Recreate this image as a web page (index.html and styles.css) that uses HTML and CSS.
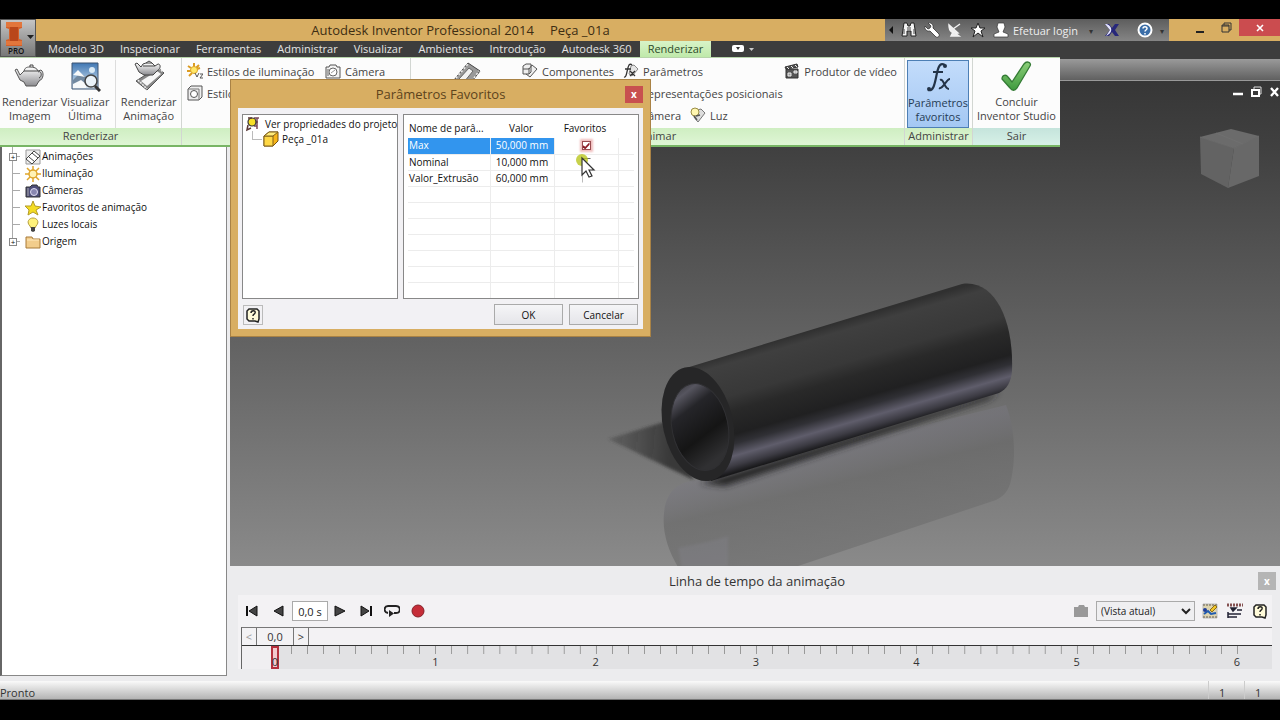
FILE: index.html
```html
<!DOCTYPE html>
<html lang="pt-BR">
<head>
<meta charset="utf-8">
<meta name="viewport" content="width=device-width, initial-scale=1">
<title>Autodesk Inventor Professional 2014 - Peça _01a</title>
<link rel="stylesheet" href="styles.css">
</head>
<body>
<div class="app">
  <header class="topbar">
    <button class="app-button" aria-label="Menu do aplicativo">
      <svg width="34" height="36" viewBox="0 0 34 36">
        <path d="M5 2h16v6l-3 1v10l3 1v6H5v-6l3-1V9L5 8z" fill="#d4602a"/>
        <path d="M9 3h8v22H9z" fill="#b9471b"/><path d="M5 2h16v5H5zM5 21h16v4H5z" fill="#e2763c"/>
        <path d="M26 15h7l-3.500 4z" fill="#222"/>
      </svg>
      <span class="app-tag">PRO</span>
    </button>
    <div class="topbar-main">
      <div class="titlebar">
        <h1 class="title"><span>Autodesk Inventor Professional 2014</span><span>Peça _01a</span></h1>
        <div class="infocenter">
          <svg width="6" height="12" viewBox="0 0 6 12"><path d="M5 2v8L1 6z" fill="#111"/></svg>
          <button class="tool" aria-label="Pesquisar"><svg width="16" height="16" viewBox="0 0 16 16"><path d="M3 1h3l1 3h2l1-3h3l2 13h-5V9H6v5H1z" fill="#f4f4f4" stroke="#222"/><path d="M3 7v5M13 7v5M7 5v3M9 5v3" stroke="#444"/></svg></button>
          <button class="tool" aria-label="Ferramentas"><svg width="16" height="16" viewBox="0 0 16 16"><path d="M4 1c3-1 6 2 5 5l6 6c1 2-1 4-3 3L6 9C3 10 0 7 1 4l3 3 2-1 1-2z" fill="#fff" stroke="#333" stroke-width=".8"/></svg></button>
          <button class="tool" aria-label="Comunicação"><svg width="16" height="16" viewBox="0 0 16 16"><path d="M2 3c0 7 4 9 9 8zM6 7l7-5M8 11l4 3H4l2-4z" fill="#eee" stroke="#f2f2f2" stroke-width="1.500"/></svg></button>
          <button class="tool" aria-label="Favoritos"><svg width="16" height="16" viewBox="0 0 16 16"><path d="M8 1l2 5h5l-4 3 2 6-5-4-5 4 2-6-4-3h5z" fill="#fff" stroke="#222"/></svg></button>
          <button class="tool login"><svg width="16" height="16" viewBox="0 0 16 16"><path d="M5 1h6l1 4-2 5 5 2v3H1v-3l5-2-2-5z" fill="#fff" stroke="#333" stroke-width=".7"/></svg><span>Efetuar login</span></button>
          <span class="dot">▾</span>
          <button class="tool" aria-label="Exchange"><svg width="16" height="16" viewBox="0 0 16 16"><path d="M1 2h4l3 4 3-4h4l-4 6 4 6h-4l-3-4-3 4H1l5-6z" fill="#27277a"/><path d="M1 2c6 0 10 8 1 12l4-6z" fill="#e8e8ff"/></svg></button>
          <button class="tool separated" aria-label="Ajuda"><svg width="16" height="16" viewBox="0 0 16 16"><circle cx="8" cy="8" r="6.500" fill="#3b6ea8" stroke="#fff" stroke-width="2"/><path d="M6 6.500C6 4 10 4 10 6.500 10 8 8 8 8 9.500M8 11v1.500" fill="none" stroke="#fff" stroke-width="1.500"/></svg></button>
          <span class="dot">▾</span>
        </div>
        <div class="window-controls">
          <button aria-label="Minimizar"><svg width="10" height="12" viewBox="0 0 10 12"><path d="M1 10h8" stroke="#222" stroke-width="2"/></svg></button>
          <button aria-label="Restaurar"><svg width="11" height="12" viewBox="0 0 11 12"><path d="M3 3V1h7v7H8M1 3h7v7H1zM1 4h7" fill="none" stroke="#333"/></svg></button>
          <button class="close" aria-label="Fechar"><svg width="10" height="10" viewBox="0 0 10 10"><path d="M2 2l6 6M8 2L2 8" stroke="#fff" stroke-width="1.600"/></svg></button>
        </div>
      </div>
      <nav class="tabs">
        <a href="#">Modelo 3D</a><a href="#">Inspecionar</a><a href="#">Ferramentas</a><a href="#">Administrar</a><a href="#">Visualizar</a><a href="#">Ambientes</a><a href="#">Introdução</a><a href="#">Autodesk 360</a><a href="#" class="active">Renderizar</a>
        <button class="tool tab-menu" aria-label="Opções da faixa"><svg width="24" height="10" viewBox="0 0 24 10"><rect x="1" y="1" width="12" height="7" rx="2" fill="#fff"/><path d="M5 3h4L7 6z" fill="#333"/><path d="M18 4h5l-2.500 3z" fill="#ccc"/></svg></button>
      </nav>
    </div>
  </header>

  <div class="ribbon-row">
    <div class="ribbon">
      <section class="panel panel-render">
        <div class="panel-body">
          <button class="big"><svg width="32" height="32" viewBox="0 0 32 32"><defs><linearGradient id="pot" x2="0" y2="1"><stop stop-color="#fff"/><stop offset="1" stop-color="#8c8c90"/></linearGradient></defs><path d="M10 11L6 15 3 9 1 10l5 10 4 2 2 4h10l3-5c5-2 5-9 2-11l-3 1c-1-3-4-4-8-4s-5 1-6 4z" fill="url(#pot)" stroke="#555"/><path d="M24 12c3-2 5 4 1 6M10 11h14M16 7V5h3v2" fill="none" stroke="#444"/></svg><span>Renderizar<br>Imagem</span></button>
          <button class="big"><svg width="32" height="32" viewBox="0 0 32 32"><defs><linearGradient id="sky" x2="0" y2="1"><stop stop-color="#3f77b4"/><stop offset="1" stop-color="#e2edf5"/></linearGradient></defs><path d="M3 3h26v26H3z" fill="url(#sky)" stroke="#3d5572"/><path d="M4 20l7-7 6 4v11H4z" fill="#7289a0"/><path d="M4 15l5-5 7 7-5-1zM4 24l8-4 5 4v4H4z" fill="#f7f9fa"/><circle cx="23" cy="10" r="3" fill="#d9eaf6"/><circle cx="22" cy="21" r="6" fill="#eaf2f8" stroke="#444" stroke-width="1.500"/><path d="M26 26l5 5" stroke="#333" stroke-width="3"/></svg><span>Visualizar<br>Última</span></button>
          <button class="big split"><svg width="32" height="32" viewBox="0 0 32 32"><path d="M3 21L25 7l6 6-17 17z" fill="#888" stroke="#555"/><path d="M8 21l16-10 4 3-14 12z" fill="#f7f7f7"/><path d="M5 20l9 9M26 8l4 4" stroke="#eee" stroke-width="1.500" stroke-dasharray="2 1"/><path d="M10 4L8 7 4 3 2 4l4 8 5 3h9l4-4c4-2 4-7 1-7l-3 2-3-3h-6z" fill="url(#pot)" stroke="#444"/><path d="M13 3l3-2 3 2M10 6h12" fill="none" stroke="#444"/></svg><span>Renderizar<br>Animação</span></button>
        </div>
        <h2>Renderizar</h2>
      </section>
      <section class="panel panel-scene">
        <div class="panel-body scene-body">
          <button class="small"><svg width="16" height="16" viewBox="0 0 16 16"><path d="M7 0v4M1 3l3 2M0 8h4M2 13l3-3M12 2L9 5M7 7l6-2" stroke="#dc9c22" stroke-width="2"/><circle cx="7" cy="7" r="3.500" fill="#ffe768" stroke="#dba529"/><path d="M8 10l2 4 2-4M13 11h3l-3 4h3" fill="none" stroke="#555"/></svg>Estilos de iluminação</button>
          <button class="small"><svg width="16" height="16" viewBox="0 0 16 16"><use href="#camera"/></svg>Câmera</button>
          <button class="small"><svg width="16" height="16" viewBox="0 0 16 16"><path d="M1 4l3-3h11v11l-3 3H1z" fill="#eee" stroke="#555"/><path d="M1 4h11v11" fill="none" stroke="#777"/><circle cx="7" cy="9" r="3.500" fill="#fff" stroke="#555"/></svg>Estilos</button>
        </div>
        <div class="panel-foot"></div>
      </section>
      <section class="panel panel-animate">
        <div class="panel-body animate-body">
          <button class="big film" aria-label="Linha de tempo"><svg width="32" height="32" viewBox="0 0 32 32"><path d="M3 20L17 3l12 8-13 17z" fill="#999" stroke="#444"/><path d="M8 19l10-11 4 3-9 11z" fill="#f2f2f2" stroke="#666"/><path d="M5 18L17 4M23 18l5-7" stroke="#eee" stroke-width="1.500" stroke-dasharray="2 2"/></svg></button>
          <div class="animate-list">
            <div class="line"><button class="small"><svg width="16" height="16" viewBox="0 0 16 16"><path d="M1 3l3-2h5v8l-2 2H1zM1 6h6l3-4 5 4-7 8-4-3" fill="#eee" stroke="#555"/><path d="M7 5v6" stroke="#555"/></svg>Componentes</button><button class="small"><svg width="16" height="16" viewBox="0 0 16 16"><path d="M8 3l3-1 4 4-6 7-3-2z" fill="#e4e4e4" stroke="#888"/><path d="M1 14c3 1 3-9 5-12 1-1 2-1 3 0M2 6h6M7 8l5 5M12 8l-5 5" fill="none" stroke="#333" stroke-width="1.300"/></svg>Parâmetros</button></div>
            <div class="line inset"><button class="small">Representações posicionais</button></div>
            <div class="line inset"><button class="small">Câmera</button><button class="small"><svg width="16" height="16" viewBox="0 0 16 16"><path d="M7 3l4-1 4 4-7 9-4-5z" fill="#ddd" stroke="#777"/><circle cx="5" cy="5" r="4" fill="#fff6b0" stroke="#998c45"/><path d="M4 9l3 4M6 9l4-1" stroke="#555" stroke-width="1.500"/></svg>Luz</button></div>
          </div>
          <button class="small producer"><svg width="16" height="16" viewBox="0 0 16 16"><path d="M2 6h12v9H2zM1 4l12-3 1 3L2 6z" fill="#555" stroke="#333"/><path d="M3 4l2 2M7 3l2 2M11 2l2 2M4 10h3v3H4zM10 8h3v2h-3z" stroke="#eee" fill="#999"/></svg>Produtor de vídeo</button>
        </div>
        <h2>Animar</h2>
      </section>
      <section class="panel panel-admin">
        <div class="panel-body">
          <button class="big selected"><svg width="32" height="32" viewBox="0 0 32 32"><path d="M6 29c6 2 7-8 9-17 2-9 4-10 8-8M11 11h10" fill="none" stroke="#243448" stroke-width="2.200"/><circle cx="7" cy="28" r="2" fill="#243448"/><circle cx="23" cy="5" r="2" fill="#243448"/><path d="M18 19c4-2 4 9 9 9M28 18c-4 0-7 11-11 9" fill="none" stroke="#243448" stroke-width="2"/></svg><span>Parâmetros<br>favoritos</span></button>
        </div>
        <h2>Administrar</h2>
      </section>
      <section class="panel panel-exit">
        <div class="panel-body">
          <button class="big"><svg width="32" height="32" viewBox="0 0 32 32"><defs><linearGradient id="ok" x2="0" y2="1"><stop stop-color="#8ccf79"/><stop offset="1" stop-color="#3f9a3e"/></linearGradient></defs><path d="M1 19c0-4 4-5 6-2l4 5L23 4c3-4 8-1 6 2L16 28c-2 3-5 3-7 0z" fill="url(#ok)" stroke="#347b35" stroke-width="1.300"/></svg><span>Concluir<br>Inventor Studio</span></button>
        </div>
        <h2>Sair</h2>
      </section>
    </div>
    <div class="ribbon-rest">
      <div class="strip"></div>
      <div class="doc-controls">
        <button aria-label="Minimizar documento"><svg width="12" height="12" viewBox="0 0 12 12"><path d="M1 8h10" stroke="#fff" stroke-width="2.500"/></svg></button>
        <button aria-label="Restaurar documento"><svg width="12" height="12" viewBox="0 0 12 12"><path d="M4 3V1h7v7H9" fill="none" stroke="#ddd"/><path d="M2 4h7v6H2z" fill="none" stroke="#fff" stroke-width="2"/></svg></button>
        <button aria-label="Fechar documento"><svg width="12" height="12" viewBox="0 0 12 12"><path d="M3 2l7 8M10 2l-7 8" stroke="#fff" stroke-width="2.300"/></svg></button>
      </div>
    </div>
  </div>

  <main class="workspace">
    <aside class="browser">
      <ul class="tree">
        <li><span class="expander">+</span><svg width="16" height="16" viewBox="0 0 16 16"><path d="M1 1h14v14H1z" fill="#eee" stroke="#999"/><path d="M1 10l8-8 6 5-8 8z" fill="#fff" stroke="#444"/><path d="M4 8l6 5M7 4l6 5" stroke="#444"/></svg>Animações</li>
        <li><svg width="16" height="16" viewBox="0 0 16 16"><path d="M8 0v16M0 8h16M2 2l12 12M14 2L2 14" stroke="#dfa62c" stroke-width="1.500"/><circle cx="8" cy="8" r="4" fill="#fff3b6" stroke="#dfa62c" stroke-width="1.500"/></svg>Iluminação</li>
        <li><svg width="16" height="16" viewBox="0 0 16 16"><path d="M1 4h4l2-2h5l1 2h2v10H1z" fill="#4d4d78" stroke="#333"/><path d="M3 5v8" stroke="#aaa"/><circle cx="9" cy="9" r="3.500" fill="#8886b0" stroke="#dedcf2"/></svg>Câmeras</li>
        <li><svg width="16" height="16" viewBox="0 0 16 16"><path d="M8 1l2 5 6 1-5 3 2 5-5-3-5 3 1-5-4-4h6z" fill="#f4dc24" stroke="#b39b27"/></svg>Favoritos de animação</li>
        <li><svg width="16" height="16" viewBox="0 0 16 16"><path d="M5 9C1 5 4 1 8 1s7 4 3 8l-1 2H6z" fill="#fff27b" stroke="#b49d3b"/><path d="M6 10h4v4l-2 1-2-1z" fill="#444"/></svg>Luzes locais</li>
        <li><span class="expander">+</span><svg width="16" height="16" viewBox="0 0 16 16"><path d="M1 3h6l1 2h7v9H1z" fill="#f2cd8c" stroke="#a87b39"/><path d="M2 6h12" stroke="#ffebc0"/></svg>Origem</li>
      </ul>
    </aside>
    <div class="right">
      <div class="viewport">
        <svg class="scene" viewBox="230 147 1050 419" preserveAspectRatio="xMidYMid slice" role="img" aria-label="Peça _01a">
          <defs>
            <linearGradient id="tube" gradientUnits="userSpaceOnUse" x1="826" y1="326" x2="858" y2="437"><stop stop-color="#303030"/><stop offset=".08" stop-color="#3f3f3f"/><stop offset=".35" stop-color="#383838"/><stop offset=".48" stop-color="#292929"/><stop offset=".68" stop-color="#202021"/><stop offset=".76" stop-color="#303035"/><stop offset=".86" stop-color="#5f5d6b"/><stop offset=".94" stop-color="#3c3b43"/><stop offset="1" stop-color="#19191b"/></linearGradient>
            <linearGradient id="bore" x1="0" y1="0" x2=".3" y2="1"><stop stop-color="#2c2c2f"/><stop offset=".18" stop-color="#56555f"/><stop offset=".36" stop-color="#252529"/><stop offset=".7" stop-color="#151515"/><stop offset="1" stop-color="#303032"/></linearGradient>
            <linearGradient id="shade" gradientUnits="userSpaceOnUse" x1="608" y1="439" x2="670" y2="445"><stop stop-color="#333" stop-opacity=".3"/><stop offset="1" stop-color="#303030" stop-opacity=".85"/></linearGradient>
            <linearGradient id="mirror" gradientUnits="userSpaceOnUse" x1="830" y1="430" x2="858" y2="545"><stop stop-color="#85838c" stop-opacity=".15"/><stop offset=".2" stop-color="#77767e" stop-opacity=".55"/><stop offset=".45" stop-color="#686868" stop-opacity=".65"/><stop offset="1" stop-color="#727272" stop-opacity=".75"/></linearGradient>
            <filter id="soft" x="-20%" y="-20%" width="140%" height="140%"><feGaussianBlur stdDeviation="3"/></filter>
            <filter id="edge" x="-20%" y="-20%" width="140%" height="140%"><feGaussianBlur stdDeviation="1.500"/></filter>
          </defs>
          <path d="M608 439L664 422l30 58z" fill="url(#shade)" filter="url(#edge)"/>
          <path d="M664 513c2-21 14-33 37-33L1006 405c11 28 9 62 4 79-3 9-8 13-14 16L795 567H678c-10-17-16-35-14-54z" fill="url(#mirror)"/>
          <path d="M678 548c20-4 36-7 50-12v31h-46z" fill="#85848d" opacity=".35" filter="url(#edge)"/>
          <path d="M700 483L1000 392l-12 8L725 486z" fill="#252528" filter="url(#soft)"/>
          <path d="M686 368L962 284c33-5 52 37 50 87-1 11-5 18-13 22L711 481z" fill="url(#tube)"/>
          <ellipse cx="698" cy="424" rx="35" ry="58" transform="rotate(-13 698 424)" fill="#262627"/>
          <ellipse cx="700" cy="427" rx="28" ry="44" transform="rotate(-12 700 427)" fill="url(#bore)" stroke="#303033"/>
          <g class="view-cube"><path d="M1200 137l31-8 28 7-25 12z" fill="#6b6b6b"/><path d="M1200 137l34 11-6 40-27-14z" fill="#636363"/><path d="M1234 148l25-12v40l-31 12z" fill="#686868"/><path d="M1200 137l34 11 25-12M1216 133l27 11" fill="none" stroke="#717171" stroke-width=".7"/></g>
        </svg>
      </div>
      <section class="timeline">
        <header class="timeline-head"><h2>Linha de tempo da animação</h2><button class="panel-close" aria-label="Fechar linha de tempo">x</button></header>
        <div class="timeline-body">
          <div class="transport">
            <button aria-label="Início"><svg width="16" height="16" viewBox="0 0 16 16"><path d="M3 3v10" stroke="#111" stroke-width="2"/><path d="M13 3v10L5 8z" fill="#444" stroke="#111"/></svg></button>
            <button aria-label="Reproduzir ao contrário"><svg width="16" height="16" viewBox="0 0 16 16"><path d="M13 3v10L4 8z" fill="#444" stroke="#111"/></svg></button>
            <input class="time" aria-label="Tempo atual" value="0,0 s">
            <button aria-label="Reproduzir"><svg width="16" height="16" viewBox="0 0 16 16"><path d="M3 3v10l10-5z" fill="#444" stroke="#111"/></svg></button>
            <button aria-label="Fim"><svg width="16" height="16" viewBox="0 0 16 16"><path d="M13 3v10" stroke="#111" stroke-width="2"/><path d="M3 3v10l8-5z" fill="#444" stroke="#111"/></svg></button>
            <button aria-label="Repetir"><svg width="16" height="16" viewBox="0 0 16 16"><path d="M4 10C-1 9 0 3 4 3h8c5 0 5 7 0 7h-2" fill="none" stroke="#222" stroke-width="1.800"/><path d="M5 7v7l5-3.500z" fill="#222"/></svg></button>
            <button aria-label="Gravar"><svg width="16" height="16" viewBox="0 0 16 16"><circle cx="8" cy="8" r="6" fill="#c52d38" stroke="#852028"/></svg></button>
            <div class="transport-right">
              <svg width="16" height="16" viewBox="0 0 16 16"><path d="M1 4h4l1-2h5l1 2h3v10H1z" fill="#999"/></svg>
              <select aria-label="Vista"><option>(Vista atual)</option></select>
              <button aria-label="Favoritos da animação"><svg width="16" height="16" viewBox="0 0 16 16"><path d="M1 1h14v14H1z" fill="#ddd4b0" stroke="#bbb"/><path d="M1 2h14M1 14h14" stroke="#665f50" stroke-dasharray="2 1"/><path d="M2 11l4-3 3 3 5-1" fill="none" stroke="#205cb0" stroke-width="2"/><path d="M8 7l5-5 2 2-5 5z" fill="#f0c52b" stroke="#8b6d18"/><circle cx="3" cy="7" r="2" fill="#1f3d9a"/></svg></button>
              <button aria-label="Opções de animação"><svg width="16" height="16" viewBox="0 0 16 16"><path d="M0 2h16" stroke="#845050" stroke-width="3" stroke-dasharray="2 1"/><path d="M4 5h5L6 8zM1 9v6M1 11h13M1 14h9M10 7h5" fill="#222" stroke="#223" stroke-width="1.500"/></svg></button>
              <button aria-label="Ajuda da animação"><svg width="16" height="16" viewBox="0 0 16 16"><use href="#help"/></svg></button>
            </div>
          </div>
          <div class="ruler">
            <div class="ruler-nav"><button class="prev">&lt;</button><span class="now">0,0</span><button>&gt;</button></div>
            <div class="scale">
              <div class="unit first"><span>0</span></div><div class="unit"><span>1</span></div><div class="unit"><span>2</span></div><div class="unit"><span>3</span></div><div class="unit"><span>4</span></div><div class="unit"><span>5</span></div><div class="unit end"><span>6</span></div>
            </div>
          </div>
        </div>
      </section>
    </div>
  </main>

  <footer class="status"><span>Pronto</span><span class="count">1</span><span class="count">1</span></footer>

  <section class="dialog" role="dialog" aria-labelledby="dialog-title">
    <header class="dialog-head"><h2 id="dialog-title">Parâmetros Favoritos</h2><button class="dialog-close" aria-label="Fechar">x</button></header>
    <div class="dialog-body">
      <div class="panes">
        <div class="pane props">
          <div class="prop-root"><svg width="16" height="16" viewBox="0 0 16 16"><path d="M9 2h5M12 2v11M9 6h4M9 10h3" fill="none" stroke="#7b4858" stroke-width="1.500"/><circle cx="7" cy="6" r="4" fill="#f7df27" stroke="#333" stroke-width="1.200"/><path d="M3 9l-1 5 4-2M3 2h4" fill="none" stroke="#5c3938" stroke-width="1.500"/></svg>Ver propriedades do projeto</div>
          <div class="prop-child"><svg width="16" height="16" viewBox="0 0 16 16"><path d="M1 5l5-4h9v9l-5 5H1z" fill="#f7b519" stroke="#765412"/><path d="M1 5h9v10H1z" fill="#ffd845" stroke="#80601b"/><path d="M1 5l5-4h9l-5 4z" fill="#ffec7b" stroke="#80601b"/></svg>Peça _01a</div>
        </div>
        <div class="pane params">
          <table>
            <colgroup><col class="c-name"><col class="c-value"><col class="c-fav"><col></colgroup>
            <thead><tr><th class="left">Nome de parâ...</th><th>Valor</th><th>Favoritos</th><th></th></tr></thead>
            <tbody>
              <tr class="picked"><td>Max</td><td>50,000 mm</td><td><input type="checkbox" aria-label="Max favorito" checked></td><td></td></tr>
              <tr><td>Nominal</td><td>10,000 mm</td><td class="pointer-cell"><input type="checkbox" class="covered" aria-label="Nominal favorito"><svg class="pointer" width="22" height="28" viewBox="0 0 22 28"><circle cx="7" cy="7" r="6" fill="#b9c51e" opacity=".8"/><path d="M7 5v17l4-4 3 6 3-1-3-6h5z" fill="#fff" stroke="#333" stroke-width="1.200"/></svg></td><td></td></tr>
              <tr><td>Valor_Extrusão</td><td>60,000 mm</td><td><input type="checkbox" class="faint" aria-label="Valor_Extrusão favorito"></td><td></td></tr>
              <tr><td></td><td></td><td></td><td></td></tr><tr><td></td><td></td><td></td><td></td></tr><tr><td></td><td></td><td></td><td></td></tr><tr><td></td><td></td><td></td><td></td></tr><tr><td></td><td></td><td></td><td></td></tr><tr><td></td><td></td><td></td><td></td></tr><tr><td></td><td></td><td></td><td></td></tr>
            </tbody>
          </table>
        </div>
      </div>
      <div class="dialog-foot"><button class="help" aria-label="Ajuda do diálogo"><svg width="16" height="16" viewBox="0 0 16 16"><g id="help"><path d="M4 2h8l2 2v8l-1 3-3-1H4l-2-2V4z" fill="#fffbd9" stroke="#222" stroke-width="1.500"/><path d="M6 6c0-3 5-3 4 0-1 2-2 1-2 3M8 11v1.500" fill="none" stroke="#222" stroke-width="1.500"/></g></svg></button><button class="action">OK</button><button class="action">Cancelar</button></div>
    </div>
  </section>
</div>
<svg class="defs" width="0" height="0" aria-hidden="true"><defs><g id="camera"><path d="M1 4h3l1-2h6l1 2h3v11H1z" fill="#f3f3f3" stroke="#555"/><circle cx="8" cy="9" r="4" fill="#fff" stroke="#666"/><path d="M2 6h2v7H2z" fill="#aaa"/><path d="M6 10l4-3" stroke="#999"/></g></defs></svg>
</body>
</html>
```
FILE: styles.css
```css
* { box-sizing: border-box; }
body { margin: 0; background: #000; font-family: "Open Sans", "Noto Sans", sans-serif; font-size: 11px; color: #333; }
h1, h2, ul { margin: 0; padding: 0; font-weight: 400; }
button { font: inherit; color: inherit; border: 0; padding: 0; margin: 0; background: none; }
svg { display: block; flex: none; }
.defs { position: absolute; }

.app { min-height: 100vh; display: flex; flex-direction: column; position: relative; border: solid #000; border-width: 19px 0 20px; background: #404040; }

/* Title bar and tabs */
.topbar { display: flex; background: #3d3d3d; }
.app-button { width: 36px; flex: none; display: grid; background: linear-gradient(#c5c5c5, #777); border: 1px solid #555; justify-items: start; }
.app-button > * { grid-area: 1 / 1; }
.app-tag { align-self: end; padding-left: 7px; font-size: 8px; line-height: 10px; font-weight: 600; color: #111; }
.topbar-main { flex: 1; min-width: 0; }
.titlebar { display: flex; height: 22px; background: #d8ae62; }
.title { flex: 1; display: flex; justify-content: center; gap: 16px; font-size: 13px; line-height: 22px; color: #3d2d12; white-space: nowrap; }
.infocenter { width: 284px; display: flex; align-items: center; gap: 7px; padding-left: 3px; background: linear-gradient(#5d5d5d, #858585); color: #eee; }
.tool { display: flex; align-items: center; }
.login { gap: 4px; white-space: nowrap; padding-right: 4px; }
.separated { margin-left: 10px; }
.dot { font-size: 8px; color: #333; padding-right: 4px; }
.window-controls { display: flex; align-items: flex-start; justify-content: flex-end; width: 111px; }
.window-controls button { width: 26px; height: 17px; display: grid; place-items: center; }
.window-controls .close { width: 41px; background: #cb4c4f; }
.tabs { display: flex; height: 16px; line-height: 16px; padding-left: 4px; background: #3d3d3d; }
.tabs a { padding: 0 8px; color: #e4e4e4; text-decoration: none; white-space: nowrap; }
.tabs .active { background: linear-gradient(#d8f3c8, #bfe9aa); color: #2e4a2b; }
.tab-menu { padding-left: 20px; }

/* Ribbon */
.ribbon-row { display: flex; }
.ribbon { display: flex; width: 1060px; flex: none; background: #fcfcfc; border-bottom: 2px solid #78b565; border-top: 1px solid #b7d4aa; }
.panel { display: flex; flex-direction: column; border-right: 1px solid #d2d6d2; }
.panel-body { display: flex; height: 70px; padding-top: 2px; }
.panel h2, .panel-foot { height: 17px; font-size: 11px; line-height: 16px; text-align: center; background: linear-gradient(#cfeec2, #dff6d5); color: #444; }
.panel-render { width: 182px; }
.panel-scene { width: 229px; }
.panel-animate { width: 494px; }
.panel-admin { width: 68px; }
.panel-exit { flex: 1; border-right: 0; }
.panel-exit h2 { background: linear-gradient(#c5e4dc, #d7f1e7); }
.big { display: flex; flex-direction: column; align-items: center; gap: 3px; line-height: 14px; white-space: nowrap; color: #444; }
.panel-render .big { width: 58px; }
.panel-render .big:first-child { width: 60px; }
.panel-render .big:nth-child(2) { width: 51px; }
.panel-render .split { width: 66px; margin-left: 5px; border-left: 1px solid #ddd; }
.panel-admin .big { width: 62px; margin-left: 2px; }
.selected { background: linear-gradient(#c3dcfb, #a4c8f3); border: 1px solid #4d7fb5; color: #263c55; }
.panel-exit .big { width: 100%; }
.small { display: flex; align-items: center; gap: 4px; height: 22px; white-space: nowrap; color: #444; }
.scene-body { display: grid; grid-template-columns: 138px 1fr; align-content: start; padding-left: 5px; }
.animate-body { justify-content: space-between; padding-right: 7px; }
.film { width: 111px; }
.animate-list { flex: 1; }
.line { display: flex; gap: 9px; }
.inset { padding-left: 119px; }
.ribbon-rest { flex: 1; background: linear-gradient(#333, #404040); }
.strip { height: 24px; background: linear-gradient(#9a9a9a, #606060); border-top: 2px solid #3d3d3d; border-bottom: 1px solid #999; }
.doc-controls { display: flex; justify-content: flex-end; gap: 6px; padding-top: 5px; }

/* Workspace */
.workspace { flex: 1; display: grid; grid-template-columns: 230px minmax(0, 1fr); background: #ececee; }
.browser { background: #fff; margin: 0 3px 5px 0; border: 1px solid #888; border-top: 0; border-left: 2px solid #666; }
.tree { list-style: none; margin-left: 7px; padding-top: 1px; font-size: 10px; line-height: 17px; color: #111; background: linear-gradient(#aaa, #aaa) 3px 0 / 1px 94px no-repeat; }
.tree li { display: grid; grid-template-columns: 15px 16px 1fr; gap: 1px; align-items: center; height: 17px; white-space: nowrap; background: linear-gradient(#aaa, #aaa) 3px 8px / 8px 1px no-repeat; }
.tree li svg { grid-column: 2; }
.expander { width: 8px; height: 8px; border: 1px solid #888; background: #fff; font-size: 8px; line-height: 6px; text-align: center; }
.right { display: flex; flex-direction: column; min-width: 0; }
.viewport { flex: 1; min-height: 200px; position: relative; background: linear-gradient(#404040, #8a8a8a); }
.scene { position: absolute; inset: 0; width: 100%; height: 100%; overflow: visible; }
.timeline { position: relative; background: #ececee; padding: 0 8px 12px; }
.timeline-head { display: grid; grid-template-columns: 18px 1fr 18px; align-items: center; height: 29px; margin-right: -4px; }
.timeline-head h2 { grid-column: 2; font-size: 13px; text-align: center; }
.panel-close { height: 18px; background: #b5b5b5; color: #fff; font-weight: 700; font-size: 10px; line-height: 14px; }
.timeline-body { background: #f3f2f4; padding-left: 3px; }
.transport { display: flex; align-items: center; gap: 10px; height: 32px; padding-left: 3px; }
.time { width: 36px; height: 20px; border: 1px solid #aaa; padding: 0; text-align: center; font: inherit; color: #222; background: #fff; margin: 0 -6px 0 -4px; }
.transport-right { margin-left: auto; display: flex; align-items: center; gap: 9px; padding-right: 4px; }
.transport-right select { width: 99px; height: 20px; border: 1px solid #aaa; background: #efeff1; font: inherit; font-size: 10px; color: #222; padding: 0; margin: 0 -2px; }
.ruler { border-left: 1px solid #666; border-top: 1px solid #777; }
.ruler-nav { display: flex; height: 18px; line-height: 17px; border-bottom: 1px solid #333; }
.ruler-nav > * { border-right: 1px solid #777; width: 15px; text-align: center; }
.ruler-nav .now { width: 37px; }
.ruler-nav .prev { color: #999; }
.scale { display: flex; height: 23px; padding: 0 34px 0 33px; background: linear-gradient(90deg, #f0eff1 33px, #e2e2e4 33px); }
.unit { flex: 1; min-width: 0; padding-top: 8px; line-height: 16px; background: linear-gradient(90deg, #999 1px, transparent 1px) 0 0 / 10% 8px repeat-x; }
.unit span { display: block; width: 20px; margin-left: -10px; text-align: center; }
.first span { width: 8px; height: 23px; margin: -8px 0 0 -4px; padding-top: 8px; border: 2px solid #b4303c; background: #f2c9cd; line-height: 12px; display: flex; justify-content: center; }
.end { flex: 0 0 1px; background: linear-gradient(#999, #999) 0 0 / 1px 8px no-repeat; }

.status { display: flex; height: 19px; line-height: 23px; background: linear-gradient(#fafafa, #b4b4b4); border-bottom: 1px solid #777; }
.status > :first-child { flex: 1; }
.count { width: 36px; border-left: 1px solid #ccc; padding-left: 10px; }

/* Floating parameter window */
.dialog { position: absolute; left: 230px; top: 60px; width: 421px; z-index: 5; padding: 0 7px 7px; background: #d8ae62; border: 1px solid #a98245; font-size: 10px; }
.dialog-head { display: grid; grid-template-columns: 18px 1fr 18px; align-items: center; height: 28px; }
.dialog-head h2 { grid-column: 2; text-align: center; font-size: 13px; color: #5c431c; }
.dialog-close { height: 17px; background: #c8504f; color: #fff; font-weight: 700; font-size: 10px; line-height: 14px; }
.dialog-body { background: #f2f1f4; padding: 6px 4px 4px; color: #111; }
.panes { display: grid; grid-template-columns: 156px 1fr; gap: 5px; }
.pane { height: 185px; border: 1px solid #888; background: #fff; overflow: hidden; white-space: nowrap; }
.props { padding: 1px 2px; line-height: 16px; }
.prop-root, .prop-child { display: flex; align-items: center; gap: 4px; height: 15px; }
.prop-child { padding-left: 18px; gap: 3px; background: linear-gradient(#bbb, #bbb) 7px 8px / 10px 1px no-repeat, linear-gradient(#bbb, #bbb) 7px 0 / 1px 8px no-repeat; }
.params { padding: 2px 4px; }
table { border-collapse: collapse; table-layout: fixed; width: 100%; }
.c-name { width: 82px; }
.c-value, .c-fav { width: 64px; }
th { font-weight: 400; height: 21px; padding: 0 2px 0 0; }
th.left { text-align: left; padding: 0 0 0 1px; }
td { height: 16px; line-height: 15px; padding: 0; border: solid #ececec; border-width: 0 1px 1px 0; text-align: center; vertical-align: middle; }
td:first-child { text-align: left; padding-left: 1px; }
td:last-child { border-right: 0; }
.picked td:nth-child(-n+2) { background: #3295ee; color: #fff; }
td input { appearance: none; display: block; width: 9px; height: 9px; margin: 0 auto; border: 1px solid #666; background: #fff; }
td input:checked { border-color: #994c50; box-shadow: 0 0 2px 2px #efbdbd; }
td input:checked::before { content: ""; display: block; width: 7px; height: 7px; background: #8d1c26; clip-path: polygon(0 40%, 40% 65%, 100% 0, 100% 35%, 40% 100%, 0 75%); }
td .covered { border-color: #666 #fff #fff; }
td .faint { border-color: #fff #fff #fff #bbb; }
.pointer-cell { position: relative; }
.pointer { position: absolute; left: 20px; top: -2px; }
.dialog-foot { display: flex; align-items: center; gap: 6px; padding: 5px 1px 0 1px; }
.help { width: 20px; height: 20px; border: 1px solid #bbb; display: grid; place-items: center; margin-right: auto; }
.action { width: 69px; height: 21px; border: 1px solid #aaa; background: linear-gradient(#f5f5f7, #e5e5e9); }
```
